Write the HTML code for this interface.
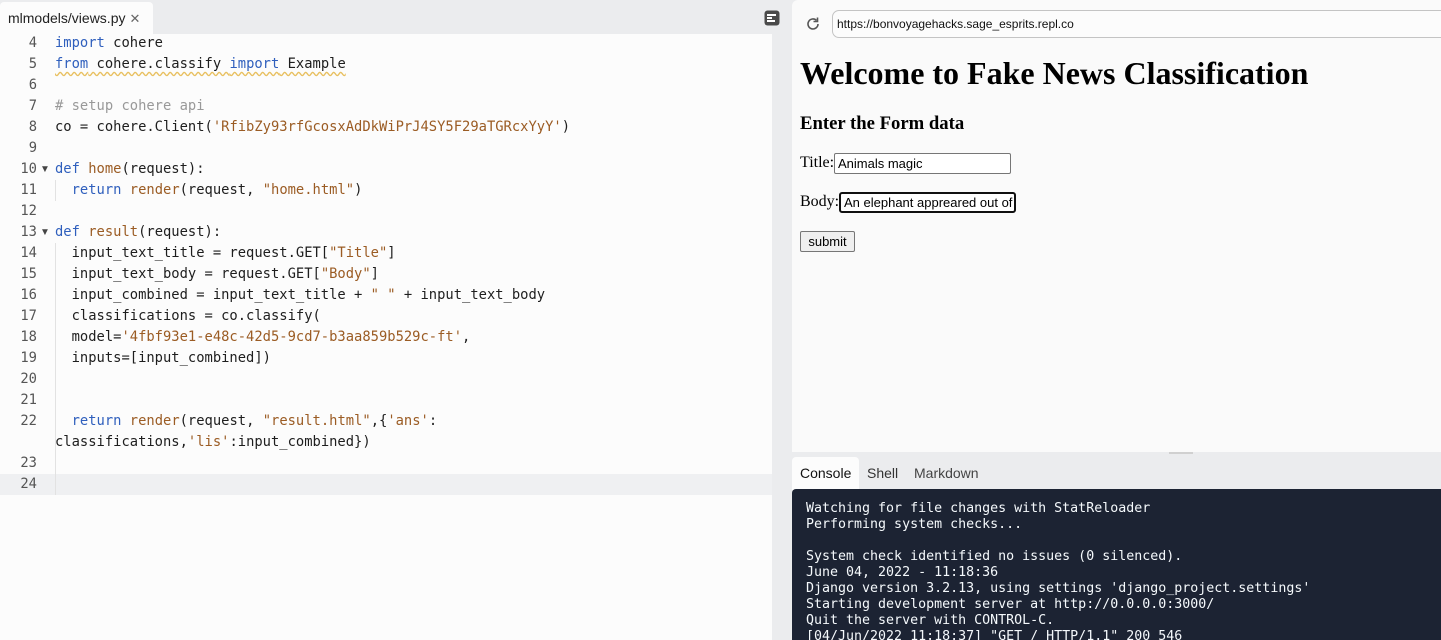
<!DOCTYPE html>
<html><head><meta charset="utf-8"><style>
*{margin:0;padding:0;box-sizing:border-box}
html,body{width:1441px;height:640px;overflow:hidden}
body{background:#ebecee;position:relative;font-family:"Liberation Sans",sans-serif}
.abs{position:absolute}
#tabbar{left:0;top:0;width:785px;height:34px;background:#ebecee}
#tab{left:0;top:2px;width:153px;height:32px;background:#fcfcfc;border-radius:4px 4px 0 0;font-size:14px;color:#222;padding:8px 0 0 8px}
#tab span{color:#666;margin-left:4px;font-size:13px}
#editor{left:0;top:34px;width:772px;height:606px;background:#fcfcfc}
#scroll{left:772px;top:97px;width:13px;height:543px;background:#ebecee}
.ln{position:absolute;left:0;width:37px;text-align:right;font-family:"DejaVu Sans Mono",monospace;font-size:13.8px;color:#555;line-height:21px;margin-top:1px}
.cd{position:absolute;left:55px;font-family:"DejaVu Sans Mono",monospace;font-size:13.8px;color:#1e1e1e;line-height:21px;white-space:pre;margin-top:1px}
.k{color:#2f5fbd}.s{color:#9b5c24}.c{color:#999}
.fold{position:absolute;left:40px;font-size:10px;color:#444;line-height:21px;margin-top:1px}
#hl{left:0;top:474px;width:772px;height:21px;background:#eff0f2}
#guide{left:55px;width:1px;background:#e2e2e2}
#right{left:792px;top:0;width:649px;height:452px;background:#fafafa;border-radius:6px 0 0 0}
#url{left:832px;top:10px;width:620px;height:28px;border:1px solid #c4c4c4;border-radius:7px;background:#fcfcfc;font-size:12px;color:#111;padding:6px 0 0 4px}
h1{position:absolute;left:800px;top:55px;font-family:"Liberation Serif",serif;font-size:32px;font-weight:bold;color:#000}
h3{position:absolute;left:800px;top:113px;font-family:"Liberation Serif",serif;font-size:18.7px;font-weight:bold;color:#000}
.lbl{position:absolute;left:800px;font-family:"Liberation Serif",serif;font-size:16px;color:#000}
.inp{position:absolute;height:21px;background:#fff;font-size:13px;padding:2px 0 0 3px;white-space:nowrap;overflow:hidden;font-family:"Liberation Sans",sans-serif}
#ctabs{left:792px;top:457px;width:649px;height:32px;background:#ebecee}
#console{left:792px;top:489px;width:649px;height:151px;background:#1c2333;border-radius:4px 0 0 0}
#console pre{position:absolute;left:14px;top:12px;font-family:"DejaVu Sans Mono",monospace;font-size:13.3px;line-height:16px;color:#f5f9fc}
</style></head><body>
<div class="abs" id="tabbar"></div>
<div class="abs" id="tab">mlmodels/views.py<span>✕</span></div>
<svg class="abs" style="left:764px;top:10px" width="16" height="16"><rect x="0.5" y="0.5" width="15" height="15" rx="3" fill="#4a4a4a"/><rect x="3" y="4" width="9" height="2" fill="#fff"/><rect x="3" y="7" width="5" height="2" fill="#fff"/><rect x="3" y="10" width="8" height="2" fill="#fff"/></svg>
<div class="abs" id="editor"></div>
<div class="abs" id="hl"></div>
<div class="abs" id="scroll"></div>
<div class="abs" id="guide" style="top:180px;height:21px"></div>
<div class="abs" id="guide" style="top:243px;height:252px"></div>

<div class="ln" style="top:32px">4</div><div class="cd" style="top:32px"><span class="k">import</span> cohere</div>
<div class="ln" style="top:53px">5</div><div class="cd" style="top:53px;text-decoration:underline wavy #e8c060;text-underline-offset:3px"><span class="k">from</span> cohere.classify <span class="k">import</span> Example</div>
<div class="ln" style="top:74px">6</div>
<div class="ln" style="top:95px">7</div><div class="cd c" style="top:95px"># setup cohere api</div>
<div class="ln" style="top:116px">8</div><div class="cd" style="top:116px">co = cohere.Client(<span class="s">'RfibZy93rfGcosxAdDkWiPrJ4SY5F29aTGRcxYyY'</span>)</div>
<div class="ln" style="top:137px">9</div>
<div class="ln" style="top:158px">10</div><div class="fold" style="top:158px">▼</div><div class="cd" style="top:158px"><span class="k">def</span> <span class="s">home</span>(request):</div>
<div class="ln" style="top:179px">11</div><div class="cd" style="top:179px">  <span class="k">return</span> <span class="s">render</span>(request, <span class="s">"home.html"</span>)</div>
<div class="ln" style="top:200px">12</div>
<div class="ln" style="top:221px">13</div><div class="fold" style="top:221px">▼</div><div class="cd" style="top:221px"><span class="k">def</span> <span class="s">result</span>(request):</div>
<div class="ln" style="top:242px">14</div><div class="cd" style="top:242px">  input_text_title = request.GET[<span class="s">"Title"</span>]</div>
<div class="ln" style="top:263px">15</div><div class="cd" style="top:263px">  input_text_body = request.GET[<span class="s">"Body"</span>]</div>
<div class="ln" style="top:284px">16</div><div class="cd" style="top:284px">  input_combined = input_text_title + <span class="s">" "</span> + input_text_body</div>
<div class="ln" style="top:305px">17</div><div class="cd" style="top:305px">  classifications = co.classify(</div>
<div class="ln" style="top:326px">18</div><div class="cd" style="top:326px">  model=<span class="s">'4fbf93e1-e48c-42d5-9cd7-b3aa859b529c-ft'</span>,</div>
<div class="ln" style="top:347px">19</div><div class="cd" style="top:347px">  inputs=[input_combined])</div>
<div class="ln" style="top:368px">20</div>
<div class="ln" style="top:389px">21</div>
<div class="ln" style="top:410px">22</div><div class="cd" style="top:410px">  <span class="k">return</span> <span class="s">render</span>(request, <span class="s">"result.html"</span>,{<span class="s">'ans'</span>:</div>
<div class="cd" style="top:431px">classifications,<span class="s">'lis'</span>:input_combined})</div>
<div class="ln" style="top:452px">23</div>
<div class="ln" style="top:473px">24</div>

<div class="abs" id="right"></div>
<svg class="abs" style="left:804px;top:15px" width="18" height="18" viewBox="0 0 18 18"><path d="M14 9a5 5 0 1 1-1.5-3.6" fill="none" stroke="#555" stroke-width="1.6"/><path d="M13.5 2.5v4h-4" fill="none" stroke="#555" stroke-width="1.6"/></svg>
<div class="abs" id="url">https://bonvoyagehacks.sage_esprits.repl.co</div>
<h1>Welcome to Fake News Classification</h1>
<h3>Enter the Form data</h3>
<div class="lbl" style="top:154px">Title:</div>
<div class="inp" style="left:834px;top:153px;width:177px;border:1px solid #767676;border-radius:2px">Animals magic</div>
<div class="lbl" style="top:193px">Body:</div>
<div class="inp" style="left:839px;top:192px;width:177px;border:2px solid #101010;border-radius:3px;padding:1px 0 0 3px">An elephant appreared out of</div>
<div class="abs" style="left:800px;top:231px;width:55px;height:21px;border:1px solid #767676;border-radius:2px;background:#efefef;font-size:13px;text-align:center;padding-top:2px">submit</div>
<div class="abs" style="left:1169px;top:452px;width:24px;height:2px;background:#d0d0d0"></div>
<div class="abs" id="ctabs"></div>
<div class="abs" style="left:792px;top:457px;width:67px;height:33px;background:#fcfcfc;border-radius:4px 4px 0 0"></div>
<div class="abs" style="left:800px;top:465px;font-size:14px;color:#111">Console</div>
<div class="abs" style="left:867px;top:465px;font-size:14px;color:#333">Shell</div>
<div class="abs" style="left:914px;top:465px;font-size:14px;color:#444">Markdown</div>
<div class="abs" id="console"><pre>Watching for file changes with StatReloader
Performing system checks...

System check identified no issues (0 silenced).
June 04, 2022 - 11:18:36
Django version 3.2.13, using settings 'django_project.settings'
Starting development server at http://0.0.0.0:3000/
Quit the server with CONTROL-C.
[04/Jun/2022 11:18:37] "GET / HTTP/1.1" 200 546</pre></div>
</body></html>
